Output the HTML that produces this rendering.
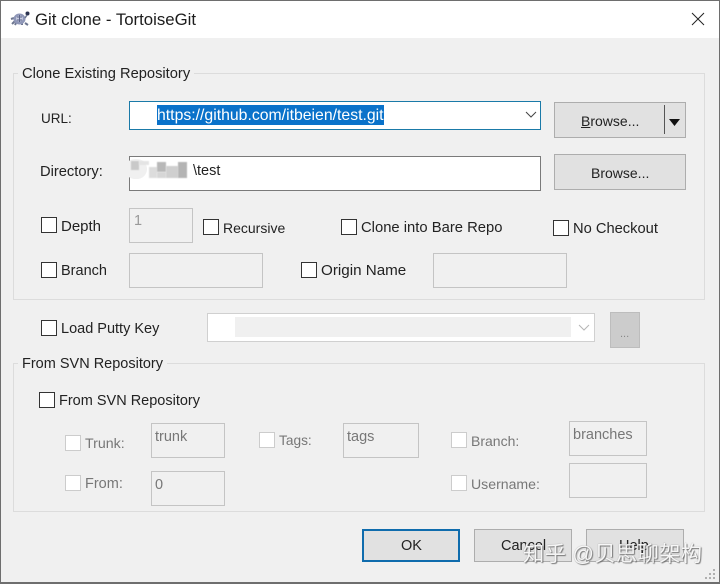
<!DOCTYPE html>
<html><head><meta charset="utf-8"><title>Git clone - TortoiseGit</title>
<style>
html,body{margin:0;padding:0;width:720px;height:584px;overflow:hidden;background:#f0f0f0}
body{position:relative;font-family:"Liberation Sans","Noto Sans CJK SC",sans-serif;font-size:15px;color:#222}
div,span.t{position:absolute;box-sizing:border-box}
.t{white-space:nowrap;line-height:18px;height:18px}
.cb{width:16px;height:16px;background:#fff;border:1px solid #333}
.cd{width:16px;height:16px;background:#fff;border:1px solid #ccc}
.in{background:#f0f0f0;border:1px solid #c4c4c4}
.btn{background:#e1e1e1;border:1px solid #adadad}
.g{color:#777}
</style></head><body>
<div style="left:0;top:0;width:720px;height:38px;background:#fff"></div>
<div style="left:0;top:0;width:720px;height:584px;border:1px solid #6e6e6e;border-bottom-width:2px;border-left-width:1px;z-index:9"></div>

<svg style="position:absolute;left:9px;top:10px" width="22" height="18" viewBox="0 0 22 18">
<path d="M2 9l3-1M3 14l3-3M16 13l3 2M6 15l1-2M13 15l0-2" stroke="#6d7690" stroke-width="2" fill="none"/>
<ellipse cx="10.500" cy="9" rx="6" ry="5.500" fill="#8f97b8"/>
<ellipse cx="10.500" cy="8.500" rx="3.500" ry="3" fill="#c7cce0"/>
<path d="M8 7h5M8 10h5M10.500 5v7" stroke="#5c6488" stroke-width="1"/>
<circle cx="18.500" cy="3.500" r="2" fill="#2c3350"/>
<path d="M16 8l2-3" stroke="#6d7690" stroke-width="1.500"/>
</svg>
<span class="t" style="left:35px;top:11px;font-size:16.800px;color:#1c1c1c">Git clone - TortoiseGit</span>
<svg style="position:absolute;left:691px;top:12px" width="14" height="14" viewBox="0 0 14 14"><path d="M1 1l12 12M13 1L1 13" stroke="#222" stroke-width="1" fill="none"/></svg>

<div style="left:13px;top:73px;width:692px;height:227px;border:1px solid #dcdcdc"></div>
<div style="left:13px;top:363px;width:692px;height:149px;border:1px solid #dcdcdc"></div>
<span class="t" style="left:18px;top:65px;padding:0 4px;background:#f0f0f0;font-size:14.700px">Clone Existing Repository</span>
<span class="t" style="left:18px;top:355px;padding:0 4px;background:#f0f0f0;font-size:14.500px">From SVN Repository</span>

<span class="t" style="left:41px;top:110px;font-size:13.500px">URL:</span>
<div style="left:129px;top:101px;width:412px;height:29px;background:#fff;border:1px solid #1a7aa8"></div>
<div style="left:157px;top:105px;width:227px;height:20px;background:#0a72ca"></div>
<span class="t" style="left:157px;top:107px;color:#fff;font-size:15.800px">https://github.com/itbeien/test.git</span>
<svg style="position:absolute;left:525px;top:111px" width="12" height="8" viewBox="0 0 12 8"><path d="M1 1l5 5 5-5" stroke="#444" fill="none"/></svg>

<div class="btn" style="left:554px;top:102px;width:132px;height:36px"></div>
<span class="t" style="left:581px;top:112px;font-size:14px"><u>B</u>rowse...</span>
<div style="left:664px;top:105px;width:1px;height:29px;background:#555"></div>
<svg style="position:absolute;left:669px;top:119px" width="11" height="7" viewBox="0 0 11 7"><path d="M0 0h11L5.500 7z" fill="#111"/></svg>

<span class="t" style="left:40px;top:163px;font-size:14.700px">Directory:</span>
<div style="left:129px;top:156px;width:412px;height:35px;background:#fff;border:1px solid #7a7a7a"></div>
<div style="left:125px;top:159px;width:22px;height:20px;background:#f0f0f0;border-radius:10px"></div>
<div style="left:131px;top:161px;width:8px;height:9px;background:#c9c9c9;filter:blur(.5px)"></div>
<div style="left:139px;top:161px;width:10px;height:4px;background:#e4e4e4;filter:blur(.5px)"></div>
<div style="left:149px;top:167px;width:8px;height:11px;background:#dcdcdc;filter:blur(.5px)"></div>
<div style="left:157px;top:162px;width:9px;height:10px;background:#b8b8b8;filter:blur(.5px)"></div>
<div style="left:157px;top:172px;width:9px;height:6px;background:#d6d6d6;filter:blur(.5px)"></div>
<div style="left:166px;top:166px;width:12px;height:12px;background:#cfcfcf;filter:blur(.5px)"></div>
<div style="left:178px;top:162px;width:9px;height:16px;background:#b4b4b4;filter:blur(.5px)"></div>
<span class="t" style="left:193px;top:162px;font-size:14.500px">\test</span>

<div class="btn" style="left:554px;top:154px;width:132px;height:36px"></div>
<span class="t" style="left:591px;top:164px;font-size:14px">Browse...</span>

<div class="cb" style="left:41px;top:217px"></div><span class="t" style="left:61px;top:218px;font-size:15px">Depth</span>
<div class="in" style="left:129px;top:208px;width:64px;height:35px"></div><span class="t g" style="left:134px;top:212px;font-size:14.500px;color:#999">1</span>
<div class="cb" style="left:203px;top:219px"></div><span class="t" style="left:223px;top:219px;font-size:14px">Recursive</span>
<div class="cb" style="left:341px;top:219px"></div><span class="t" style="left:361px;top:219px;font-size:14.800px">Clone into Bare Repo</span>
<div class="cb" style="left:553px;top:220px"></div><span class="t" style="left:573px;top:220px;font-size:14.700px">No Checkout</span>

<div class="cb" style="left:41px;top:262px"></div><span class="t" style="left:61px;top:262px;font-size:14.500px">Branch</span>
<div class="in" style="left:129px;top:253px;width:134px;height:35px"></div>
<div class="cb" style="left:301px;top:262px"></div><span class="t" style="left:321px;top:262px;font-size:15.200px">Origin Name</span>
<div class="in" style="left:433px;top:253px;width:134px;height:35px"></div>

<div class="cb" style="left:41px;top:320px"></div><span class="t" style="left:61px;top:320px;font-size:14.500px">Load Putty Key</span>
<div style="left:207px;top:313px;width:388px;height:29px;background:#fff;border:1px solid #d0d0d0"></div>
<div style="left:235px;top:317px;width:336px;height:20px;background:#f0f0f0"></div>
<svg style="position:absolute;left:578px;top:324px" width="12" height="8" viewBox="0 0 12 8"><path d="M1 1l5 5 5-5" stroke="#b5b5b5" fill="none"/></svg>
<div style="left:610px;top:312px;width:30px;height:36px;background:#cccccc;border:1px solid #bdbdbd"></div>
<span class="t" style="left:620px;top:325px;font-size:11px;color:#888">...</span>

<div class="cb" style="left:39px;top:392px"></div><span class="t" style="left:59px;top:392px;font-size:14.500px">From SVN Repository</span>

<div class="cd" style="left:65px;top:435px"></div><span class="t g" style="left:85px;top:435px;font-size:14.200px">Trunk:</span>
<div class="in" style="left:151px;top:423px;width:74px;height:35px"></div><span class="t g" style="left:155px;top:428px;font-size:14.500px">trunk</span>
<div class="cd" style="left:259px;top:432px"></div><span class="t g" style="left:279px;top:432px;font-size:13.700px">Tags:</span>
<div class="in" style="left:343px;top:423px;width:76px;height:35px"></div><span class="t g" style="left:347px;top:428px;font-size:14.500px">tags</span>
<div class="cd" style="left:451px;top:432px"></div><span class="t g" style="left:471px;top:432px;font-size:14px">Branch:</span>
<div class="in" style="left:569px;top:421px;width:78px;height:35px"></div><span class="t g" style="left:573px;top:426px;font-size:14.500px">branches</span>

<div class="cd" style="left:65px;top:475px"></div><span class="t g" style="left:85px;top:475px;font-size:14.500px">From:</span>
<div class="in" style="left:151px;top:471px;width:74px;height:35px"></div><span class="t g" style="left:155px;top:476px;font-size:14.500px">0</span>
<div class="cd" style="left:451px;top:475px"></div><span class="t g" style="left:471px;top:475px;font-size:14.100px">Username:</span>
<div class="in" style="left:569px;top:463px;width:78px;height:35px"></div>

<div class="btn" style="left:362px;top:529px;width:98px;height:33px;border:2px solid #0f6cad"></div>
<span class="t" style="left:401px;top:537px;font-size:14.500px">OK</span>
<div class="btn" style="left:474px;top:529px;width:98px;height:33px"></div>
<span class="t" style="left:501px;top:537px;font-size:14.500px">Cancel</span>
<div class="btn" style="left:586px;top:529px;width:98px;height:33px"></div>
<span class="t" style="left:619px;top:537px;font-size:14.500px">Help</span>

<span class="t" style="left:523px;top:542px;height:24px;line-height:24px;font-size:21.300px;color:rgba(255,255,255,.92);text-shadow:1px 1px 1px rgba(90,90,90,.75),0 0 1px rgba(90,90,90,.6);z-index:5;letter-spacing:0.300px">知乎 @贝思聊架构</span>

<svg style="position:absolute;left:705px;top:569px" width="12" height="12" viewBox="0 0 12 12" fill="#b0b0b0"><rect x="8" y="0" width="2" height="2"/><rect x="4" y="4" width="2" height="2"/><rect x="8" y="4" width="2" height="2"/><rect x="0" y="8" width="2" height="2"/><rect x="4" y="8" width="2" height="2"/><rect x="8" y="8" width="2" height="2"/></svg>
</body></html>
